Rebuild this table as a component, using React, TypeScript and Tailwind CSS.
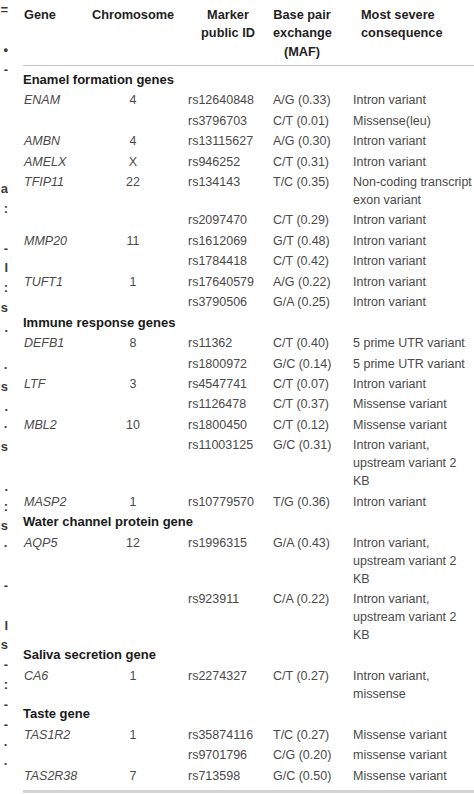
import React from 'react';

interface Row {
  gene?: string;
  chr?: string;
  id: string;
  bp: string;
  cons: string[];
}

interface Section {
  title: string;
  rows: Row[];
}

const sections: Section[] = [
  {
    title: 'Enamel formation genes',
    rows: [
      { gene: 'ENAM', chr: '4', id: 'rs12640848', bp: 'A/G (0.33)', cons: ['Intron variant'] },
      { id: 'rs3796703', bp: 'C/T (0.01)', cons: ['Missense(leu)'] },
      { gene: 'AMBN', chr: '4', id: 'rs13115627', bp: 'A/G (0.30)', cons: ['Intron variant'] },
      { gene: 'AMELX', chr: 'X', id: 'rs946252', bp: 'C/T (0.31)', cons: ['Intron variant'] },
      { gene: 'TFIP11', chr: '22', id: 'rs134143', bp: 'T/C (0.35)', cons: ['Non-coding transcript', 'exon variant'] },
      { id: 'rs2097470', bp: 'C/T (0.29)', cons: ['Intron variant'] },
      { gene: 'MMP20', chr: '11', id: 'rs1612069', bp: 'G/T (0.48)', cons: ['Intron variant'] },
      { id: 'rs1784418', bp: 'C/T (0.42)', cons: ['Intron variant'] },
      { gene: 'TUFT1', chr: '1', id: 'rs17640579', bp: 'A/G (0.22)', cons: ['Intron variant'] },
      { id: 'rs3790506', bp: 'G/A (0.25)', cons: ['Intron variant'] },
    ],
  },
  {
    title: 'Immune response genes',
    rows: [
      { gene: 'DEFB1', chr: '8', id: 'rs11362', bp: 'C/T (0.40)', cons: ['5 prime UTR variant'] },
      { id: 'rs1800972', bp: 'G/C (0.14)', cons: ['5 prime UTR variant'] },
      { gene: 'LTF', chr: '3', id: 'rs4547741', bp: 'C/T (0.07)', cons: ['Intron variant'] },
      { id: 'rs1126478', bp: 'C/T (0.37)', cons: ['Missense variant'] },
      { gene: 'MBL2', chr: '10', id: 'rs1800450', bp: 'C/T (0.12)', cons: ['Missense variant'] },
      { id: 'rs11003125', bp: 'G/C (0.31)', cons: ['Intron variant,', 'upstream variant 2', 'KB'] },
      { gene: 'MASP2', chr: '1', id: 'rs10779570', bp: 'T/G (0.36)', cons: ['Intron variant'] },
    ],
  },
  {
    title: 'Water channel protein gene',
    rows: [
      { gene: 'AQP5', chr: '12', id: 'rs1996315', bp: 'G/A (0.43)', cons: ['Intron variant,', 'upstream variant 2', 'KB'] },
      { id: 'rs923911', bp: 'C/A (0.22)', cons: ['Intron variant,', 'upstream variant 2', 'KB'] },
    ],
  },
  {
    title: 'Saliva secretion gene',
    rows: [{ gene: 'CA6', chr: '1', id: 'rs2274327', bp: 'C/T (0.27)', cons: ['Intron variant,', 'missense'] }],
  },
  {
    title: 'Taste gene',
    rows: [
      { gene: 'TAS1R2', chr: '1', id: 'rs35874116', bp: 'T/C (0.27)', cons: ['Missense variant'] },
      { id: 'rs9701796', bp: 'C/G (0.20)', cons: ['missense variant'] },
      { gene: 'TAS2R38', chr: '7', id: 'rs713598', bp: 'G/C (0.50)', cons: ['Missense variant'] },
    ],
  },
];

// clipped bits of the neighbouring column at the left edge
const edge = [
  '=', '', '•', '-', '', '', '', '', '', 'a', ':', '', '-', 'l', ':', 's', '.', '', '·', 's',
  '.', '·', 's', '', '.', ':', 's', '·', '', '-', '', 'l', 's', '-', ':', '-', '-', '·', '·', '',
];

const cell = 'py-[1.22px] leading-[18px]';

export default function App() {
  return (
    <div
      className="flex w-[474px] h-[794px] overflow-hidden bg-white"
      style={{ fontFamily: '"Liberation Sans", Arial, sans-serif' }}
    >
      {/* left margin with edge fragments */}
      <div className="w-[24px] shrink-0 flex flex-col">
        {edge.map((ch, i) => (
          <div key={i} className="h-[20px] w-[8px] overflow-hidden flex justify-end items-center">
            <span className="text-[13px] font-bold text-[#3a3a3a] leading-none whitespace-nowrap">{ch}</span>
          </div>
        ))}
      </div>

      <div className="flex-1 flex flex-col">
        {/* header */}
        <div className="grid grid-cols-[68px_96px_85px_80px_1fr] pt-[5.75px] pb-[3.5px] text-[12.75px] leading-[18.5px] font-bold text-[#1f1f1f]">
          <div>Gene</div>
          <div className="w-[82px] text-center">Chromosome</div>
          <div className="w-[80px] text-center">
            Marker
            <br />
            public ID
          </div>
          <div className="w-[58px] text-center">
            Base pair
            <br />
            exchange
            <br />
            (MAF)
          </div>
          <div className="pl-[8px]">
            Most severe
            <br />
            consequence
          </div>
        </div>
        <div className="-ml-[1px] border-b border-[#c2c2c2]" />

        {/* body */}
        <div className="grid grid-cols-[68px_96px_85px_80px_1fr] mt-[3.85px] text-[12.5px] text-[#4a4a4a]">
          {sections.map((s) => (
            <React.Fragment key={s.title}>
              <div className={`col-span-5 -ml-[1px] ${cell} text-[13px] font-bold text-[#1a1a1a]`}>{s.title}</div>
              {s.rows.map((r) => (
                <React.Fragment key={r.id}>
                  <div className={`${cell} italic`}>{r.gene ?? ''}</div>
                  <div className={`${cell} w-[82px] text-center`}>{r.chr ?? ''}</div>
                  <div className={cell}>{r.id}</div>
                  <div className={cell}>{r.bp}</div>
                  <div className={`${cell} whitespace-nowrap`}>
                    {r.cons.map((line, i) => (
                      <div key={i}>{line}</div>
                    ))}
                  </div>
                </React.Fragment>
              ))}
            </React.Fragment>
          ))}
        </div>
        <div className="-ml-[1px] mt-[4px] h-[3px] bg-[#d4d4d4]" />
      </div>
    </div>
  );
}
